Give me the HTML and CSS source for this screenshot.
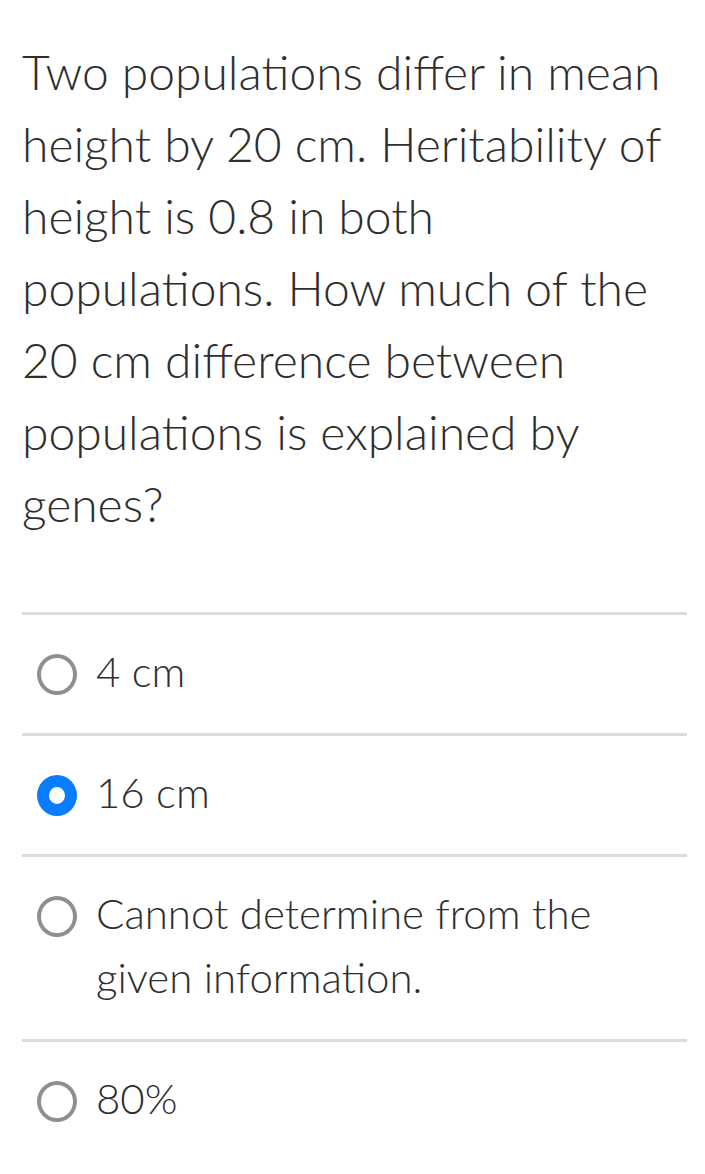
FILE: index.html
```html
<!DOCTYPE html>
<html>
<head>
<meta charset="utf-8">
<link rel="stylesheet" href="styles.css">
</head>
<body>
<div class="page">
  <p class="question">Two populations differ in mean height by 20 cm. Heritability of height is 0.8 in both populations. How much of the 20 cm difference between populations is explained by genes?</p>
  <ul class="options">
    <li class="option"><span class="radio"></span><span class="label">4 cm</span></li>
    <li class="option"><span class="radio selected"></span><span class="label">16 cm</span></li>
    <li class="option"><span class="radio"></span><span class="label">Cannot determine from the given information.</span></li>
    <li class="option"><span class="radio"></span><span class="label">80%</span></li>
  </ul>
</div>
</body>
</html>
```
FILE: styles.css
```css
html, body {
  margin: 0;
  padding: 0;
  background: #ffffff;
}
body {
  font-family: "Lato Light", "Lato", "Liberation Sans", sans-serif;
  font-weight: 300;
  color: #2e2e2e;
}
.page {
  padding: 36px 18px 0 22px;
}
.question {
  margin: 0;
  font-size: 48px;
  line-height: 72px;
  padding-right: 10px;
}
.options {
  list-style: none;
  margin: 72px 0 0 0;
  padding: 0;
  border-top: 3px solid #dcdcdc;
}
.option {
  display: flex;
  align-items: flex-start;
  gap: 19px;
  padding: 24px 0 30px 15px;
  border-bottom: 3px solid #dcdcdc;
  font-size: 42px;
  line-height: 64px;
}
.option:last-child {
  border-bottom: none;
}
.radio {
  flex: none;
  box-sizing: border-box;
  width: 40px;
  height: 41px;
  margin-top: 15px;
  border-radius: 50%;
  border: 4px solid #8e8e93;
}
.radio.selected {
  border: 12px solid #0a7cff;
}
.label {
  flex: 1;
}
```
